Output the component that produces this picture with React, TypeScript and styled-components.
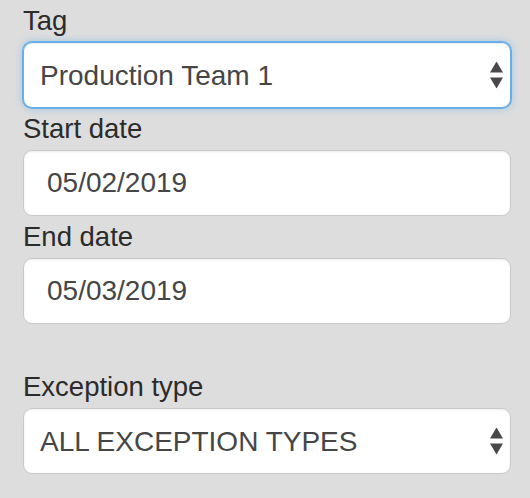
import React from "react";
import styled, { createGlobalStyle, css } from "styled-components";

const GlobalStyle = createGlobalStyle`
  html, body {
    margin: 0;
    padding: 0;
    background: #dddddd;
  }
  body {
    font-family: "Liberation Sans", Arial, sans-serif;
  }
`;

const App = () => {
  return (
    <>
      <GlobalStyle />
      <Form>
        <Field>
          <Label>Tag</Label>
          <SelectWrap>
            <Select focused defaultValue="team1">
              <option value="team1">Production Team 1</option>
              <option value="team2">Production Team 2</option>
            </Select>
            <Arrows />
          </SelectWrap>
        </Field>
        <Field>
          <Label>Start date</Label>
          <Input type="text" defaultValue="05/02/2019" />
        </Field>
        <Field>
          <Label>End date</Label>
          <Input type="text" defaultValue="05/03/2019" />
        </Field>
        <Spacer />
        <Field>
          <Label>Exception type</Label>
          <SelectWrap>
            <Select defaultValue="all">
              <option value="all">ALL EXCEPTION TYPES</option>
            </Select>
            <Arrows />
          </SelectWrap>
        </Field>
      </Form>
    </>
  );
};

export default App;

const Arrows = () => (
  <ArrowIcon width="13" height="27" viewBox="0 0 13 27">
    <polygon points="6.5,0 13,11 0,11" fill="#484848" />
    <polygon points="0,16 13,16 6.5,27" fill="#484848" />
  </ArrowIcon>
);

const Form = styled.div`
  display: flex;
  flex-direction: column;
  padding: 6px 19px 0 23px;
`;

const Field = styled.div`
  display: flex;
  flex-direction: column;
  margin-bottom: 6px;
`;

const Spacer = styled.div`
  height: 42px;
`;

const Label = styled.label`
  font-size: 27.5px;
  line-height: 30px;
  color: #2b2b2b;
  margin-bottom: 6px;
`;

const control = css`
  box-sizing: border-box;
  width: 100%;
  height: 66px;
  margin: 0;
  background: #ffffff;
  border: 1px solid #c9c9c9;
  border-radius: 9px;
  box-shadow: inset 0 1px 2px rgba(0, 0, 0, 0.075);
  font-family: "Liberation Sans", Arial, sans-serif;
  font-size: 28px;
  color: #464646;
  outline: none;
`;

const Input = styled.input`
  ${control};
  padding: 0 20px 0 23px;
`;

const SelectWrap = styled.div`
  position: relative;
  width: 100%;
`;

const Select = styled.select<{ focused?: boolean }>`
  ${control};
  appearance: none;
  -webkit-appearance: none;
  padding: 0 50px 0 16px;
  ${(p) =>
    p.focused &&
    css`
      border: 1px solid #66afe9;
      box-shadow: inset 0 1px 1px rgba(0, 0, 0, 0.075),
        0 0 0 1px #66afe9, 0 0 8px rgba(102, 175, 233, 0.6);
    `}
`;

const ArrowIcon = styled.svg`
  position: absolute;
  right: 8px;
  top: 50%;
  transform: translateY(-50%);
  pointer-events: none;
`;
